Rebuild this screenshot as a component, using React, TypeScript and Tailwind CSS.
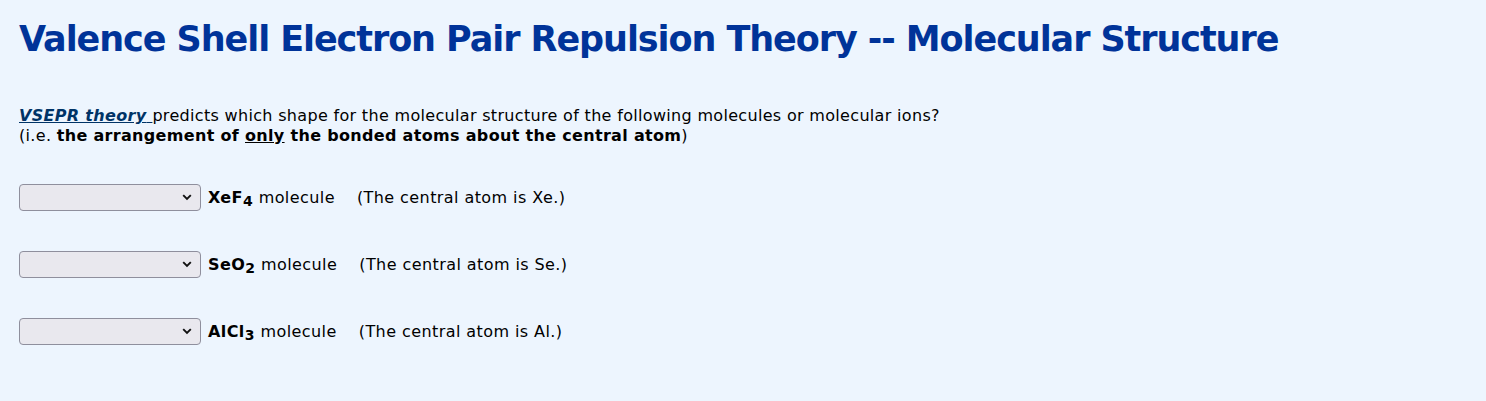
import React from "react";

const font = { fontFamily: '"DejaVu Sans", Verdana, sans-serif' };

function ShapeSelect() {
  return (
    <div className="relative w-[182px] h-[27px]">
      <select className="appearance-none w-full h-full rounded-[4px] border border-[#8f8f9d] bg-[#e9e8ee] text-[15px] text-black pl-1 pr-6">
        <option value=""></option>
        <option>linear</option>
        <option>bent</option>
        <option>trigonal planar</option>
        <option>trigonal pyramidal</option>
        <option>tetrahedral</option>
        <option>square planar</option>
        <option>see-saw</option>
        <option>T-shaped</option>
        <option>trigonal bipyramidal</option>
        <option>square pyramidal</option>
        <option>octahedral</option>
      </select>
      <svg
        className="pointer-events-none absolute right-[9px] top-[10px]"
        width="10"
        height="7"
        viewBox="0 0 10 7"
        fill="none"
      >
        <path d="M1.2 1.2L5 5l3.8-3.8" stroke="#111" strokeWidth="1.9" />
      </svg>
    </div>
  );
}

function Row({ formula, sub, atom }: { formula: string; sub: string; atom: string }) {
  return (
    <div className="flex items-center h-[27px]">
      <ShapeSelect />
      <span className="ml-[7px] text-[16px] tracking-[0.42px] text-black whitespace-pre">
        <b>
          {formula}
          <sub className="text-[14px]">{sub}</sub>
        </b>{" "}
        molecule{"    "}(The central atom is {atom}.)
      </span>
    </div>
  );
}

export default function App() {
  return (
    <div className="min-h-[401px] bg-[#edf5fe] px-[19px] pt-[18px] pb-10" style={font}>
      <h1 className="text-[35px] font-bold tracking-[-1.07px] text-[#003399] leading-[42px]">
        Valence Shell Electron Pair Repulsion Theory -- Molecular Structure
      </h1>
      <p className="mt-[46px] text-[16px] tracking-[0.32px] leading-[20px] text-black">
        <a href="#" className="italic font-bold underline text-[#003366]">
          VSEPR theory{" "}
        </a>
        predicts which shape for the molecular structure of the following molecules or molecular ions?
        <br />
        (i.e. <b>the arrangement of <u>only</u> the bonded atoms about the central atom</b>)
      </p>
      <div className="mt-[38px] flex flex-col gap-[40px]">
        <Row formula="XeF" sub="4" atom="Xe" />
        <Row formula="SeO" sub="2" atom="Se" />
        <Row formula="AlCl" sub="3" atom="Al" />
      </div>
    </div>
  );
}
